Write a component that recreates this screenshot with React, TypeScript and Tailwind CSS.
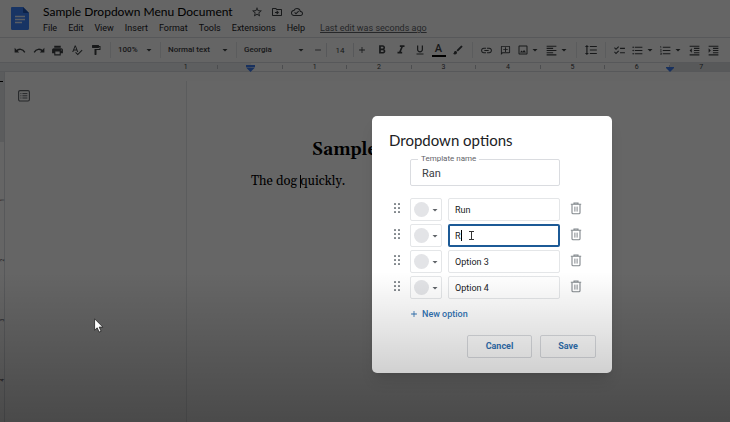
import { useState, type ReactNode } from 'react';
import {
  MdAdd,
  MdArrowDropDown,
  MdBrush,
  MdChecklist,
  MdFormatAlignLeft,
  MdFormatBold,
  MdFormatIndentDecrease,
  MdFormatIndentIncrease,
  MdFormatItalic,
  MdFormatLineSpacing,
  MdFormatListBulleted,
  MdFormatListNumbered,
  MdFormatPaint,
  MdFormatUnderlined,
  MdLink,
  MdOutlineAddComment,
  MdOutlineCloudDone,
  MdOutlineDriveFileMove,
  MdOutlineImage,
  MdPrint,
  MdRemove,
  MdSpellcheck,
  MdStarOutline,
} from 'react-icons/md';
import { clsx } from 'clsx';

const MENUS = ['File', 'Edit', 'View', 'Insert', 'Format', 'Tools', 'Extensions', 'Help'];
const RULER = ['1', '', '1', '2', '3', '4', '5', '6', '7'];
const SIDE_RULER = ['1', '2', '3', '4'];

function DocsLogo() {
  return (
    <svg viewBox="0 0 18 23" className="h-[23px] w-[18px]" aria-hidden="true">
      <path d="M1.2 0H12l6 6v15.8c0 .7-.5 1.2-1.2 1.2H1.2C.5 23 0 22.5 0 21.8V1.2C0 .5.5 0 1.2 0z" fill="#3c82fa" />
      <path d="M12 0l6 6h-5.2c-.5 0-.8-.3-.8-.8z" fill="#2156b4" />
      <path d="M4 9.5h10M4 12.5h10M4 15.5h7" stroke="#dfe9fb" strokeWidth="1.3" />
    </svg>
  );
}

function UndoIcon({ flip }: { flip?: boolean }) {
  return (
    <svg viewBox="0 0 12 7" className={clsx('h-[7px] w-3', flip && '-scale-x-100')} fill="none" stroke="currentColor">
      <path d="M2.2 4.2C4.6 1.4 8.8 1.6 10.8 5.4" strokeWidth="1.4" />
      <path d="M.6.8v4.6h4.6z" fill="currentColor" stroke="none" />
    </svg>
  );
}

function OutlineIcon() {
  return (
    <svg viewBox="0 0 12 12" className="h-3 w-3" fill="none" stroke="currentColor">
      <rect x="0.6" y="0.6" width="10.8" height="10.4" rx="1.4" strokeWidth="1.1" />
      <path d="M4.4 3.6h5M4.4 5.8h5M4.4 8h5" strokeWidth="1" />
      <path d="M2.4 3.6h1M2.4 5.8h1M2.4 8h1" strokeWidth="1" />
    </svg>
  );
}

function DragIcon() {
  return (
    <svg viewBox="0 0 8 12" className="h-3 w-2" fill="currentColor">
      {[2, 6, 10].map((y) => (
        <g key={y}>
          <rect x="1" y={y - 1} width="2" height="2" rx=".6" />
          <rect x="5" y={y - 1} width="2" height="2" rx=".6" />
        </g>
      ))}
    </svg>
  );
}

function TrashIcon() {
  return (
    <svg viewBox="0 0 12 13" className="h-[13px] w-3" fill="none" stroke="currentColor">
      <path d="M.8 2.3h10.4M4 2V1h4v1" strokeWidth="1.1" />
      <path d="M2 2.5v8.2c0 .7.4 1.1 1.1 1.1h5.8c.7 0 1.1-.4 1.1-1.1V2.5" strokeWidth="1.1" />
      <path d="M4.9 4.6v5M7.1 4.6v5" strokeWidth="1" />
    </svg>
  );
}

function Tool({ label, split, children }: { label: string; split?: boolean; children: ReactNode }) {
  return (
    <button
      aria-label={label}
      className={clsx('flex h-5 shrink-0 items-center justify-center', split ? 'w-7' : 'w-[19px]')}
    >
      {children}
      {split && <MdArrowDropDown size={12} />}
    </button>
  );
}

function Separator() {
  return (
    <div className="flex w-[10px] shrink-0 justify-center">
      <div className="h-4 w-px bg-[#e4e6e8]" />
    </div>
  );
}

function ToolSelect({ label, value, className }: { label: string; value: string; className: string }) {
  return (
    <label className={clsx('relative flex h-5 shrink-0 items-center', className)}>
      <select aria-label={label} className="w-full appearance-none bg-transparent pl-[3px] text-[8px] font-medium">
        <option>{value}</option>
      </select>
      <MdArrowDropDown size={12} className="pointer-events-none absolute right-0" />
    </label>
  );
}

function Header() {
  return (
    <header className="flex h-[37px] pl-[11px]">
      <a href="#" aria-label="Docs home" className="mt-[7px]">
        <DocsLogo />
      </a>
      <div className="ml-[14px] min-w-0">
        <div className="mt-1 flex h-4 items-center text-[#3c4043]">
          <h1 className="text-[12px] leading-4 whitespace-nowrap text-black [font-family:Lato,sans-serif]">
            Sample Dropdown Menu Document
          </h1>
          <div className="ml-[18px] flex items-center gap-2">
            <button aria-label="Star"><MdStarOutline size={12} /></button>
            <button aria-label="Move"><MdOutlineDriveFileMove size={12} /></button>
            <button aria-label="Saved to Drive"><MdOutlineCloudDone size={12} /></button>
          </div>
        </div>
        <nav className="mt-[2px] flex items-center gap-[11px] text-[9px] leading-3 whitespace-nowrap text-[#202124]">
          {MENUS.map((menu) => (
            <button key={menu}>{menu}</button>
          ))}
          <a href="#" className="ml-1 text-[#5f6368] underline">
            Last edit was seconds ago
          </a>
        </nav>
      </div>
    </header>
  );
}

function Toolbar() {
  return (
    <div className="flex h-[25px] items-center border-t border-[#dadce0] pl-[10px] text-[#3c4043]">
      <Tool label="Undo"><UndoIcon /></Tool>
      <Tool label="Redo"><UndoIcon flip /></Tool>
      <Tool label="Print"><MdPrint size={13} /></Tool>
      <Tool label="Spelling"><MdSpellcheck size={12} /></Tool>
      <Tool label="Paint format"><MdFormatPaint size={12} /></Tool>
      <Separator />
      <ToolSelect label="Zoom" value="100%" className="w-10" />
      <Separator />
      <ToolSelect label="Styles" value="Normal text" className="w-[66px]" />
      <Separator />
      <ToolSelect label="Font" value="Georgia" className="w-[66px]" />
      <button aria-label="Decrease font size" className="ml-[3px] flex w-4 justify-center">
        <MdRemove size={10} />
      </button>
      <input
        aria-label="Font size"
        defaultValue="14"
        className="h-[14px] w-7 border-x border-[#dadce0] bg-transparent text-center text-[8px]"
      />
      <button aria-label="Increase font size" className="mr-[2px] flex w-4 justify-center">
        <MdAdd size={10} />
      </button>
      <Tool label="Bold"><MdFormatBold size={14} /></Tool>
      <Tool label="Italic"><MdFormatItalic size={14} /></Tool>
      <Tool label="Underline"><MdFormatUnderlined size={12} /></Tool>
      <Tool label="Text color">
        <span className="w-[14px] border-b-2 border-black text-[11px] leading-3 font-medium">A</span>
      </Tool>
      <Tool label="Highlight color"><MdBrush size={12} /></Tool>
      <Separator />
      <Tool label="Insert link"><MdLink size={13} /></Tool>
      <Tool label="Add comment"><MdOutlineAddComment size={11} className="-scale-x-100" /></Tool>
      <Tool label="Insert image" split><MdOutlineImage size={12} /></Tool>
      <Tool label="Align" split><MdFormatAlignLeft size={13} /></Tool>
      <Separator />
      <Tool label="Line spacing"><MdFormatLineSpacing size={14} /></Tool>
      <Separator />
      <Tool label="Checklist"><MdChecklist size={13} /></Tool>
      <Tool label="Bulleted list" split><MdFormatListBulleted size={13} /></Tool>
      <Tool label="Numbered list" split><MdFormatListNumbered size={13} /></Tool>
      <Tool label="Decrease indent"><MdFormatIndentDecrease size={13} /></Tool>
      <Tool label="Increase indent"><MdFormatIndentIncrease size={13} /></Tool>
    </div>
  );
}

function Ruler() {
  return (
    <div className="relative flex h-[10px] border-y border-[#dadce0] text-[7px] leading-[8px] text-[#3c4043]">
      <div className="w-[251px] shrink-0 bg-[#eceef0]" />
      <div className="w-[419px] shrink-0" />
      <div className="flex-1 bg-[#dcdee0]" />
      <div className="absolute top-0 left-[154px] grid w-[580px] grid-cols-9 text-center">
        {RULER.map((mark, i) => (
          <div key={i} className="flex h-2 items-center">
            <span className="flex-1">{mark}</span>
            <span className="h-1 w-px bg-[#bdc1c6]" />
          </div>
        ))}
      </div>
      <svg viewBox="0 0 9 7" className="absolute top-[2px] left-[246px] h-[7px] w-[9px]" fill="#3f7cec">
        <path d="M0 0h9v2H0zM0 2.6h9L4.5 7z" />
      </svg>
      <svg viewBox="0 0 8 5" className="absolute top-1 left-[666px] h-[5px] w-2" fill="#3f7cec">
        <path d="M0 0h8v1L4 5 0 1z" />
      </svg>
    </div>
  );
}

function Editor() {
  return (
    <main className="flex flex-1">
      <div className="w-[5px] shrink-0 border-r border-[#dadce0] text-[5px] leading-[4px] text-[#3c4043]">
        <div className="h-[70px] bg-[#e4e6e8] pt-[9px]">
          <div className="h-px w-[3px] bg-black" />
        </div>
        <div className="pt-[28px]">
          {SIDE_RULER.map((mark) => (
            <div key={mark} className="flex h-[60px] w-1 items-center justify-center">
              <span className="-rotate-90">{mark}</span>
            </div>
          ))}
        </div>
      </div>
      <aside className="w-[181px] shrink-0 pt-[18px] pl-[13px] text-[#5f6368]">
        <button aria-label="Show outline" className="block">
          <OutlineIcon />
        </button>
      </aside>
      <article className="mt-[9px] flex-1 border-l border-[#e4e6e8] bg-white pt-[57px] pl-16 text-black [font-family:Gelasio,'Liberation_Serif',serif]">
        <h2 className="pl-[61px] text-[17px] leading-6 font-bold">Sample</h2>
        <p className="mt-[7px] flex items-center text-[13px] leading-6 whitespace-pre">
          The dog <span className="-mr-px h-[13px] w-px bg-black" />quickly.
        </p>
      </article>
    </main>
  );
}

function OptionRow({ index, value, active }: { index: number; value: string; active?: boolean }) {
  const [text, setText] = useState(value);

  return (
    <li className="flex items-start gap-[6px]">
      <button aria-label="Reorder" className="flex h-5 w-[15px] items-center justify-center text-[#80868b]">
        <DragIcon />
      </button>
      <button
        aria-label={`Color of option ${index}`}
        className="flex h-[23px] w-8 items-center justify-end rounded-xs border border-[#e4e6e8] text-[#5f6368]"
      >
        <span className="h-[15px] w-[15px] rounded-full bg-[#e3e4e7]" />
        <MdArrowDropDown size={12} />
      </button>
      <div className="relative min-w-0 flex-1">
        <input
          aria-label={`Option ${index}`}
          value={text}
          onChange={(e) => setText(e.target.value)}
          className={clsx(
            'block h-[23px] w-full rounded-xs text-[9px] text-[#202124] outline-none',
            active ? 'border-2 border-[#1c5a96] px-[5px]' : 'border border-[#e4e6e8] px-[6px]'
          )}
        />
        {active && (
          <>
            <span className="absolute top-[6px] left-[13px] h-[11px] w-px bg-black" />
            <svg viewBox="0 0 5 9" className="absolute top-[7px] left-[21px] h-[9px] w-[5px]" fill="none" stroke="#333">
              <path d="M0 .5h5M0 8.5h5M2.5 0v9" />
            </svg>
          </>
        )}
      </div>
      <button
        aria-label={`Delete option ${index}`}
        className="flex h-5 w-5 items-center justify-center text-[#80868b]"
      >
        <TrashIcon />
      </button>
    </li>
  );
}

function DropdownDialog() {
  return (
    <div
      role="dialog"
      aria-labelledby="dialog-title"
      className="w-60 rounded-[5px] bg-white pt-[14px] pb-[15px] pl-[17px] shadow-lg"
    >
      <h2 id="dialog-title" className="text-[15px] leading-5 text-[#202124] [font-family:Lato,sans-serif]">
        Dropdown options
      </h2>
      <fieldset className="mt-1 mr-[52px] ml-[21px] h-8 rounded-xs border border-[#dadce0]">
        <legend className="ml-[7px] px-[3px] text-[8px] leading-[10px] text-[#5f6368]">
          <label htmlFor="template">Template name</label>
        </legend>
        <input
          id="template"
          defaultValue="Ran"
          className="block h-[18px] w-full px-[11px] text-[11px] leading-4 text-[#3c4043] outline-none"
        />
      </fieldset>
      <ul className="mt-3 mr-[26px] flex flex-col gap-[3px]">
        <OptionRow index={1} value="Run" />
        <OptionRow index={2} value="R" active />
        <OptionRow index={3} value="Option 3" />
        <OptionRow index={4} value="Option 4" />
      </ul>
      <button className="mt-[9px] ml-5 flex items-center gap-[3px] text-[9px] leading-3 font-medium text-[#3173b4]">
        <MdAdd size={10} />
        New option
      </button>
      <div className="mt-[15px] mr-4 flex justify-end gap-2 text-[9px] font-bold text-[#3173b4]">
        <button className="h-[23px] w-[65px] rounded-xs border border-[#dadce0]">Cancel</button>
        <button className="h-[23px] w-14 rounded-xs border border-[#dadce0]">Save</button>
      </div>
    </div>
  );
}

export default function App() {
  return (
    <div className="relative flex min-h-screen flex-col overflow-hidden bg-[#fcfcfd] [font-family:Roboto,sans-serif]">
      <Header />
      <Toolbar />
      <Ruler />
      <Editor />
      {/* Scrim with the dialog on top */}
      <div className="absolute inset-0 flex items-start justify-end bg-black/60 pt-[116px] pr-[118px]">
        <DropdownDialog />
      </div>
      <div className="pointer-events-none absolute inset-x-0 bottom-0 h-[150px] bg-linear-to-b from-transparent to-black/27" />
      {/* Mouse pointer */}
      <svg viewBox="0 0 10 15" className="pointer-events-none absolute top-[318px] left-[94px] h-[15px] w-[10px]">
        <path d="M.6.8v11.4l2.6-2.4 1.9 4.3 2-.9-1.9-4.1h3.7z" fill="#fff" stroke="#222" strokeWidth=".8" />
      </svg>
    </div>
  );
}
